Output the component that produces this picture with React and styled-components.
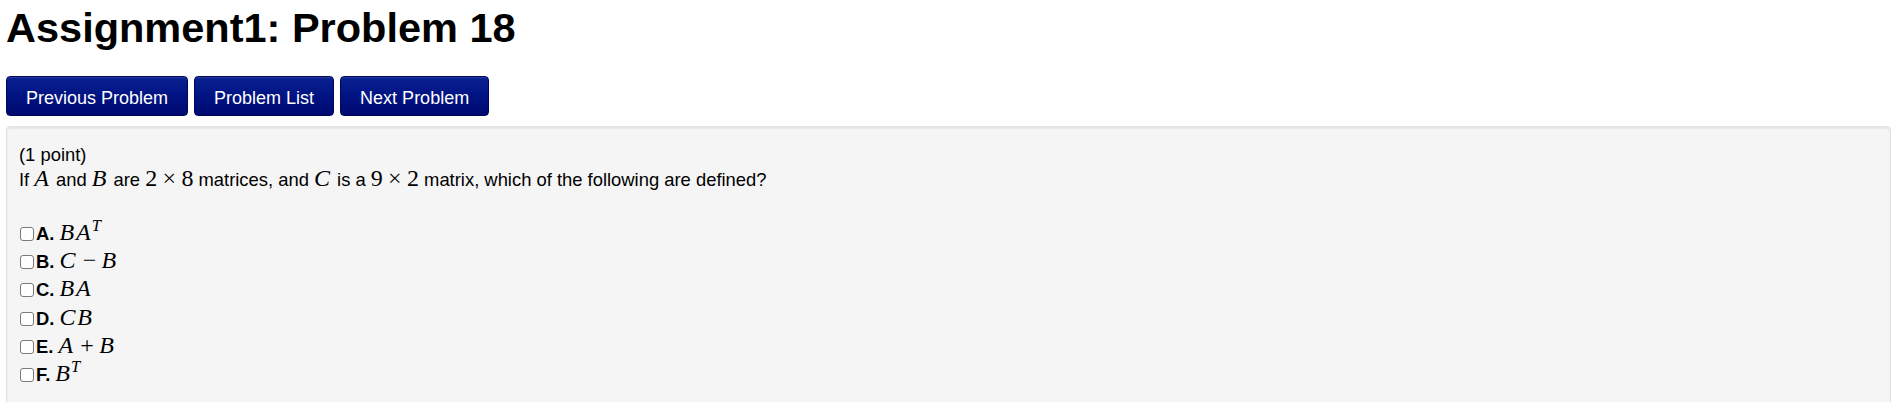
import React from "react";
import styled, { createGlobalStyle } from "styled-components";

const Global = createGlobalStyle`
  html, body { margin: 0; padding: 0; background: #ffffff; }
  body { font-family: "Liberation Sans", Arial, Helvetica, sans-serif; color: #000; }
`;

const Page = styled.div`
  padding: 4px 1px 0 6px;
`;

const Title = styled.h1`
  margin: 0;
  font-family: "Liberation Sans", Arial, sans-serif;
  font-weight: 700;
  font-size: 41.5px;
  line-height: 48px;
`;

const Nav = styled.nav`
  display: flex;
  gap: 6px;
  margin-top: 24px;
`;

const NavButton = styled.button`
  font-family: "Liberation Sans", Arial, sans-serif;
  font-size: 18px;
  line-height: 20px;
  color: #ffffff;
  padding: 11px 19px 7px;
  border: 1px solid #00075a;
  border-radius: 4px;
  background: linear-gradient(to bottom, #0a2192 0%, #001383 50%, #000a70 100%);
  box-shadow: inset 0 1px 0 rgba(255, 255, 255, 0.12);
  cursor: pointer;
`;

const Panel = styled.section`
  margin-top: 10px;
  background: #f5f5f5;
  border: 1px solid #e2e2e2;
  border-radius: 4px;
  box-shadow: inset 0 2px 2px rgba(0, 0, 0, 0.06);
  padding: 15px 12px 14px;
  font-size: 18.4px;
`;

const Line = styled.div`
  line-height: 25.4px;
  white-space: nowrap;
`;

const M = styled.span`
  font-family: "Liberation Serif", "Times New Roman", serif;
  font-size: 24px;
  line-height: 0;
  font-style: normal;
`;

const V = styled.i`
  font-style: italic;
  margin-right: ${(p) => (p.$tight ? "0" : "0.08em")};
`;

const Op = styled.span`
  margin: 0 0.222em;
`;

const Sup = styled.span`
  font-family: "Liberation Serif", "Times New Roman", serif;
  font-style: italic;
  font-size: 16.5px;
  line-height: 0;
  position: relative;
  top: -9px;
  margin-left: 1px;
`;

const Options = styled.div`
  margin-top: 26.8px;
`;

const OptionRow = styled.label`
  display: block;
  line-height: 28.3px;
  white-space: nowrap;
`;

const Check = styled.input.attrs({ type: "checkbox" })`
  appearance: none;
  -webkit-appearance: none;
  width: 14px;
  height: 14px;
  margin: 0 2px 0 1px;
  border: 1.5px solid #7a7a7a;
  border-radius: 3px;
  background: #ffffff;
  vertical-align: -1px;
  box-sizing: border-box;
`;

const Letter = styled.b`
  font-weight: 700;
  margin-right: 5px;
`;

const options = [
  { key: "A", body: <><M><V>B</V><V $tight>A</V></M><Sup>T</Sup></> },
  { key: "B", body: <M><V>C</V><Op>−</Op><V>B</V></M> },
  { key: "C", body: <M><V>B</V><V>A</V></M> },
  { key: "D", body: <M><V>C</V><V>B</V></M> },
  { key: "E", body: <M><V>A</V><Op>+</Op><V>B</V></M> },
  { key: "F", body: <><M><V $tight>B</V></M><Sup>T</Sup></> },
];

export default function App() {
  return (
    <Page>
      <Global />
      <Title>Assignment1: Problem 18</Title>
      <Nav>
        <NavButton>Previous Problem</NavButton>
        <NavButton>Problem List</NavButton>
        <NavButton>Next Problem</NavButton>
      </Nav>
      <Panel>
        <Line>(1 point)</Line>
        <Line>
          If <M><V>A</V></M> and <M><V>B</V></M> are <M>2<Op>×</Op>8</M> matrices, and{" "}
          <M><V>C</V></M> is a <M>9<Op>×</Op>2</M> matrix, which of the following are defined?
        </Line>
        <Options>
          {options.map((o) => (
            <OptionRow key={o.key}>
              <Check />
              <Letter>{o.key}.</Letter>
              {o.body}
            </OptionRow>
          ))}
        </Options>
      </Panel>
    </Page>
  );
}
